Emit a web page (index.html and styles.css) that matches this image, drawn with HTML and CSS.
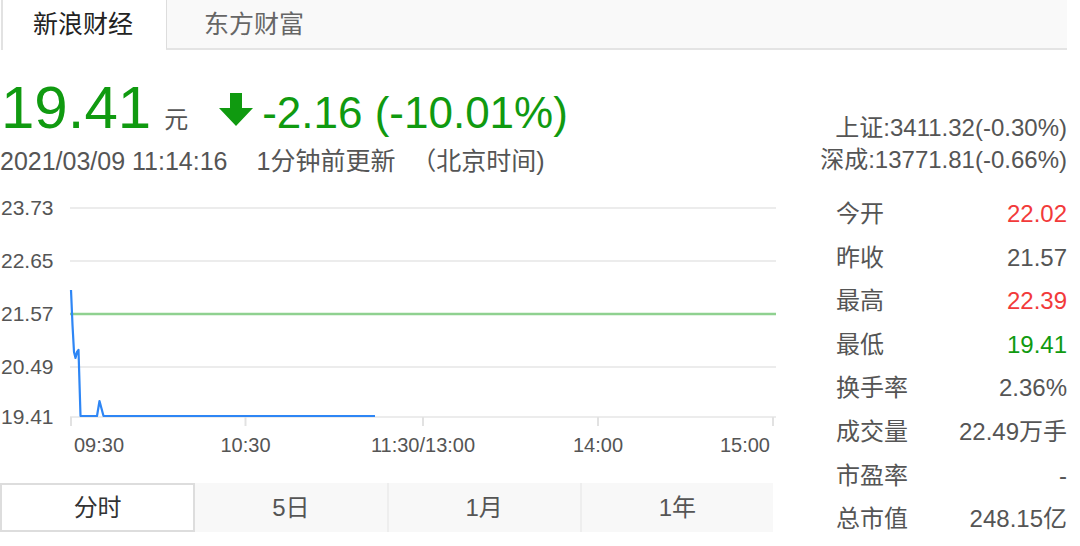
FILE: index.html
```html
<!DOCTYPE html>
<html lang="zh">
<head>
    <meta charset="UTF-8">
    <meta name="viewport" content="width=device-width, initial-scale=1.0">
    <title>行情</title>
    <link rel="stylesheet" href="styles.css">
</head>
<body>
    <div class="page">
        <div class="source-tabs">
            <div class="source-tab active">新浪财经</div>
            <div class="source-tab">东方财富</div>
        </div>

        <div class="quote">
            <div class="quote-main">
                <div class="price-row">
                    <span class="price">19.41</span>
                    <span class="unit">元</span>
                    <svg class="arrow" viewBox="0 0 34 34" width="34" height="34">
                        <path fill="currentColor" d="M11,0 H23 V15 H34 L17,33 L0,15 H11 Z" />
                    </svg>
                    <span class="change">-2.16 (-10.01%)</span>
                </div>
                <div class="time-row">
                    <span>2021/03/09 11:14:16</span>
                    <span class="updated">1分钟前更新</span>
                    <span class="zone">（北京时间)</span>
                </div>
            </div>
            <div class="index-list">
                <div>上证:3411.32(-0.30%)</div>
                <div>深成:13771.81(-0.66%)</div>
            </div>
        </div>

        <div class="main">
            <div class="chart-col">
                <svg class="chart" viewBox="0 192 780 270" width="780" height="270">
                    <!-- сетка -->
                    <g class="grid">
                        <line x1="70" y1="208" x2="776" y2="208" />
                        <line x1="70" y1="261" x2="776" y2="261" />
                        <line x1="70" y1="367" x2="776" y2="367" />
                        <line x1="70" y1="417" x2="776" y2="417" />
                    </g>
                    <g class="ticks">
                        <line x1="71" y1="417" x2="71" y2="426" />
                        <line x1="245.5" y1="417" x2="245.5" y2="426" />
                        <line x1="423" y1="417" x2="423" y2="426" />
                        <line x1="598" y1="417" x2="598" y2="426" />
                        <line x1="773" y1="417" x2="773" y2="426" />
                    </g>
                    <line class="prev-close" x1="70" y1="314" x2="776" y2="314" />
                    <path class="price-line" d="M71,290 L72.5,325 L74,352 L75.5,358 L77,352 L78.5,350 L80.5,416 L97,416 L99.5,401 L103.5,416 L375,416" />
                    <g class="y-labels">
                        <text x="1" y="215">23.73</text>
                        <text x="1" y="268">22.65</text>
                        <text x="1" y="321">21.57</text>
                        <text x="1" y="374">20.49</text>
                        <text x="1" y="424">19.41</text>
                    </g>
                    <g class="x-labels">
                        <text x="74" y="452">09:30</text>
                        <text x="245.5" y="452" text-anchor="middle">10:30</text>
                        <text x="423" y="452" text-anchor="middle">11:30/13:00</text>
                        <text x="598" y="452" text-anchor="middle">14:00</text>
                        <text x="770" y="452" text-anchor="end">15:00</text>
                    </g>
                </svg>
                <div class="range-tabs">
                    <div class="range-tab active">分时</div>
                    <div class="range-tab">5日</div>
                    <div class="range-tab">1月</div>
                    <div class="range-tab">1年</div>
                </div>
            </div>

            <div class="stats">
                <div class="stat"><span class="stat-label">今开</span><span class="stat-value up">22.02</span></div>
                <div class="stat"><span class="stat-label">昨收</span><span class="stat-value">21.57</span></div>
                <div class="stat"><span class="stat-label">最高</span><span class="stat-value up">22.39</span></div>
                <div class="stat"><span class="stat-label">最低</span><span class="stat-value down">19.41</span></div>
                <div class="stat"><span class="stat-label">换手率</span><span class="stat-value">2.36%</span></div>
                <div class="stat"><span class="stat-label">成交量</span><span class="stat-value">22.49万手</span></div>
                <div class="stat"><span class="stat-label">市盈率</span><span class="stat-value">-</span></div>
                <div class="stat"><span class="stat-label">总市值</span><span class="stat-value">248.15亿</span></div>
            </div>
        </div>
    </div>
</body>
</html>
```

FILE: styles.css
```css
body {
    margin: 0;
    font-family: "Liberation Sans", "Noto Sans CJK SC", sans-serif;
    background-color: #fff;
    color: #555;
}
.page {
    width: 1067px;
}
.source-tabs {
    display: flex;
    height: 50px;
}
.source-tab {
    box-sizing: border-box;
    height: 50px;
    line-height: 48px;
    font-size: 25px;
    color: #666;
    padding-left: 37px;
    flex-grow: 1;
    background-color: #f9f9f9;
    border-left: 1px solid #ddd;
    border-bottom: 2px solid #e4e4e4;
}
.source-tab.active {
    flex-grow: 0;
    width: 165px;
    margin-left: 1px;
    padding-left: 30px;
    color: #222;
    background-color: #fff;
    border-left: 2px solid #e2e2e2;
    border-bottom: none;
}
.quote {
    display: flex;
    justify-content: space-between;
    align-items: flex-end;
    height: 142px;
    box-sizing: border-box;
    padding-bottom: 16px;
}
.price-row {
    display: flex;
    align-items: baseline;
    height: 60px;
    margin-bottom: 8px;
    color: #109a10;
}
.price {
    font-size: 60px;
    line-height: 60px;
    padding-left: 1px;
}
.unit {
    font-size: 24px;
    color: #555;
    margin-left: 13px;
}
.arrow {
    align-self: center;
    margin-left: 31px;
    margin-top: 4px;
}
.change {
    font-size: 44px;
    margin-left: 9px;
}
.time-row {
    font-size: 25px;
    line-height: 30px;
    white-space: nowrap;
}
.updated {
    margin-left: 22px;
}
.zone {
    margin-left: 9px;
}
.index-list {
    font-size: 24px;
    line-height: 32px;
    text-align: right;
}
.main {
    display: flex;
    justify-content: space-between;
}
.chart {
    display: block;
}
.grid line {
    stroke: #ececec;
    stroke-width: 2;
}
.ticks line {
    stroke: #e2e2e2;
    stroke-width: 2;
}
.prev-close {
    stroke: #8fd190;
    stroke-width: 2.5;
}
.price-line {
    fill: none;
    stroke: #2e86f5;
    stroke-width: 2.2;
    stroke-linejoin: round;
}
.y-labels text {
    font-size: 21px;
    fill: #555;
}
.x-labels text {
    font-size: 20px;
    fill: #555;
}
.range-tabs {
    display: flex;
    width: 773px;
    margin-top: 21px;
    height: 49px;
    background-color: #f8f8f8;
}
.range-tab {
    flex: 1;
    box-sizing: border-box;
    text-align: center;
    font-size: 24px;
    line-height: 49px;
    color: #555;
    border-left: 2px solid #eee;
}
.range-tab:first-child + .range-tab {
    border-left: none;
}
.range-tab.active {
    background-color: #fff;
    border: 2px solid #ddd;
    line-height: 45px;
    color: #333;
}
.stats {
    width: 231px;
}
.stat {
    display: flex;
    justify-content: space-between;
    align-items: baseline;
    height: 43.6px;
    line-height: 43.6px;
    font-size: 24px;
}
.stat-value.up {
    color: #f23a3a;
}
.stat-value.down {
    color: #109a10;
}
```
